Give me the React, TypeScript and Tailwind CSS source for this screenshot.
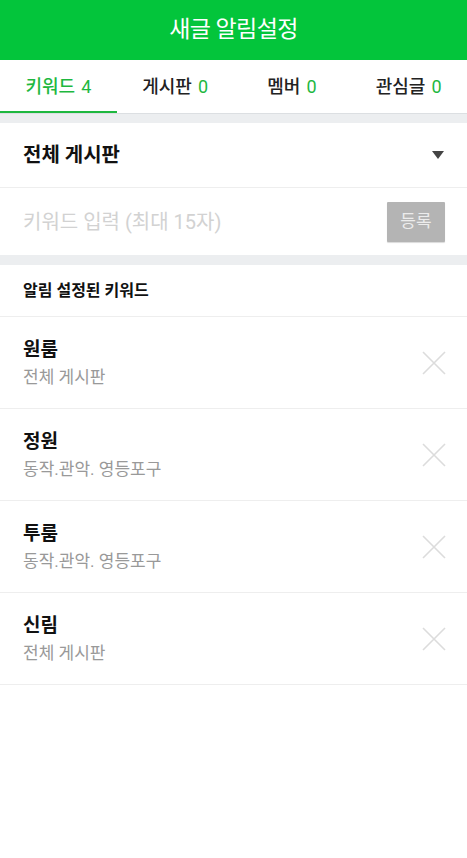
import React from 'react';

const font = { fontFamily: 'Roboto, "Noto Sans CJK KR", "Noto Sans", sans-serif' };

const tabs = [
  { label: '키워드', count: 4, active: true },
  { label: '게시판', count: 0 },
  { label: '멤버', count: 0 },
  { label: '관심글', count: 0 },
];

const keywords = [
  { word: '원룸', board: '전체 게시판' },
  { word: '정원', board: '동작.관악. 영등포구' },
  { word: '투룸', board: '동작.관악. 영등포구' },
  { word: '신림', board: '전체 게시판' },
];

function CloseIcon() {
  return (
    <svg width="24" height="24" viewBox="0 0 24 24" fill="none" stroke="#dcdcdc" strokeWidth="1.6">
      <path d="M1 1L23 23M23 1L1 23" />
    </svg>
  );
}

export default function App() {
  return (
    <div className="min-h-[858px] bg-white" style={font}>
      {/* 헤더 */}
      <div className="h-[60px] bg-[#03c53b] flex items-center justify-center">
        <h1 className="text-white text-[23px] tracking-tight">새글 알림설정</h1>
      </div>

      {/* 탭 */}
      <div className="grid grid-cols-4 h-[54px] border-b border-[#dcdfe2]">
        {tabs.map((tab) => (
          <div
            key={tab.label}
            className={`flex items-center justify-center text-[18px] font-medium ${
              tab.active ? 'text-[#1eb83f] border-b-2 border-[#1eb83f] pt-[2px]' : 'text-[#222]'
            }`}
          >
            <span>{tab.label}</span>
            <span className="ml-[6px] text-[#1eb83f] font-normal">{tab.count}</span>
          </div>
        ))}
      </div>

      <div className="h-[9px] bg-[#eceef0]" />

      {/* 게시판 선택 */}
      <div className="h-[65px] flex items-center justify-between pl-[23px] pr-[23px] border-b border-[#eeeeee]">
        <span className="text-[20px] font-bold text-[#111]">전체 게시판</span>
        <span className="w-0 h-0 border-l-[6px] border-r-[6px] border-t-[8px] border-l-transparent border-r-transparent border-t-[#444]" />
      </div>

      {/* 키워드 입력 */}
      <div className="h-[67px] flex items-center justify-between pl-[23px] pr-[22px]">
        <span className="text-[20px] text-[#d2d2d2]">키워드 입력 (최대 15자)</span>
        <button className="w-[58px] h-[40px] bg-[#b4b4b4] text-[#ececec] text-[17px] rounded-[1px] shadow-[0_1px_1px_rgba(0,0,0,0.15)]">
          등록
        </button>
      </div>

      <div className="h-[10px] bg-[#eceef0]" />

      {/* 알림 설정된 키워드 */}
      <div className="h-[52px] flex items-center pl-[23px] border-b border-[#eeeeee]">
        <span className="text-[16px] font-bold text-[#111]">알림 설정된 키워드</span>
      </div>

      {keywords.map((k) => (
        <div
          key={k.word}
          className="h-[92px] flex items-center justify-between pl-[23px] pr-[21px] border-b border-[#eeeeee]"
        >
          <div className="flex flex-col">
            <span className="text-[19px] font-bold text-[#111] leading-[26px]">{k.word}</span>
            <span className="text-[17px] text-[#999] leading-[24px] mt-[2px]">{k.board}</span>
          </div>
          <CloseIcon />
        </div>
      ))}
    </div>
  );
}
